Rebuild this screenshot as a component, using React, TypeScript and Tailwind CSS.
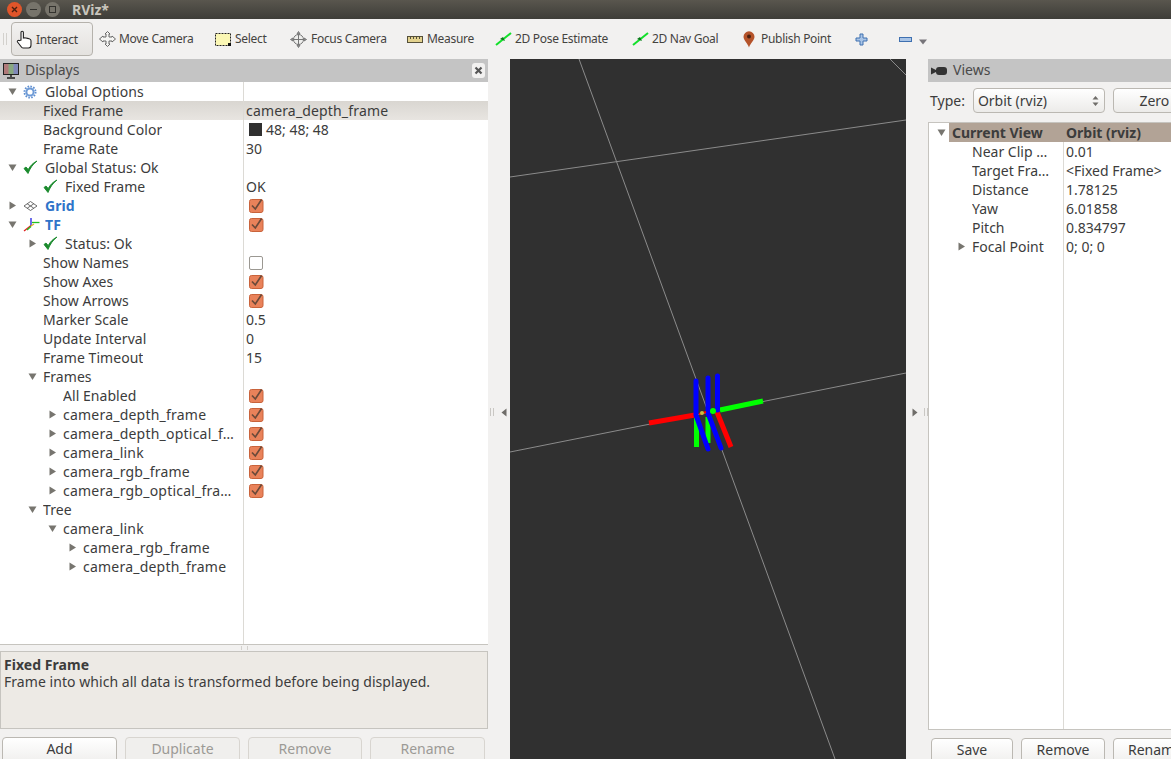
import type { ReactNode } from "react";

const FONT = "font-['Noto_Sans','Open_Sans',sans-serif]";
const DEPTH = ["pl-0", "pl-5", "pl-10", "pl-[60px]"];

type Row = {
  label: string;
  depth: number;
  arrow?: "open" | "closed";
  icon?: "gear" | "check" | "grid" | "tf";
  value?: string;
  swatch?: boolean;
  box?: boolean | "off";
  blue?: boolean;
  selected?: boolean;
};

const displayRows: Row[] = [
  { label: "Global Options", depth: 0, arrow: "open", icon: "gear" },
  { label: "Fixed Frame", depth: 1, value: "camera_depth_frame", selected: true },
  { label: "Background Color", depth: 1, value: "48; 48; 48", swatch: true },
  { label: "Frame Rate", depth: 1, value: "30" },
  { label: "Global Status: Ok", depth: 0, arrow: "open", icon: "check" },
  { label: "Fixed Frame", depth: 1, icon: "check", value: "OK" },
  { label: "Grid", depth: 0, arrow: "closed", icon: "grid", box: true, blue: true },
  { label: "TF", depth: 0, arrow: "open", icon: "tf", box: true, blue: true },
  { label: "Status: Ok", depth: 1, arrow: "closed", icon: "check" },
  { label: "Show Names", depth: 1, box: "off" },
  { label: "Show Axes", depth: 1, box: true },
  { label: "Show Arrows", depth: 1, box: true },
  { label: "Marker Scale", depth: 1, value: "0.5" },
  { label: "Update Interval", depth: 1, value: "0" },
  { label: "Frame Timeout", depth: 1, value: "15" },
  { label: "Frames", depth: 1, arrow: "open" },
  { label: "All Enabled", depth: 2, box: true },
  { label: "camera_depth_frame", depth: 2, arrow: "closed", box: true },
  { label: "camera_depth_optical_f…", depth: 2, arrow: "closed", box: true },
  { label: "camera_link", depth: 2, arrow: "closed", box: true },
  { label: "camera_rgb_frame", depth: 2, arrow: "closed", box: true },
  { label: "camera_rgb_optical_fra…", depth: 2, arrow: "closed", box: true },
  { label: "Tree", depth: 1, arrow: "open" },
  { label: "camera_link", depth: 2, arrow: "open" },
  { label: "camera_rgb_frame", depth: 3, arrow: "closed" },
  { label: "camera_depth_frame", depth: 3, arrow: "closed" },
];

const viewRows = [
  { label: "Near Clip …", value: "0.01" },
  { label: "Target Fra…", value: "<Fixed Frame>" },
  { label: "Distance", value: "1.78125" },
  { label: "Yaw", value: "6.01858" },
  { label: "Pitch", value: "0.834797" },
  { label: "Focal Point", value: "0; 0; 0", arrow: true },
];

function Arrow({ dir }: { dir: "open" | "closed" }) {
  return (
    <svg width="9" height="9" viewBox="0 0 9 9" className="shrink-0">
      {dir === "open" ? <path d="M0.5 1.5H8.5L4.5 8Z" fill="#77756f" /> : <path d="M1.5 0.5V8.5L8 4.5Z" fill="#77756f" />}
    </svg>
  );
}

function TreeIcon({ name }: { name: NonNullable<Row["icon"]> }) {
  if (name === "gear") {
    return (
      <svg width="14" height="14" viewBox="0 0 14 14">
        <circle cx="7" cy="7" r="3.6" fill="#fff" stroke="#6d9ad6" strokeWidth="2" />
        <circle cx="7" cy="7" r="5.6" fill="none" stroke="#5f8fd0" strokeWidth="1.8" strokeDasharray="1.6 1.3" />
      </svg>
    );
  }
  if (name === "check") {
    return (
      <svg width="15" height="15" viewBox="0 0 15 15">
        <path d="M1 8.500L5 13.500C7 8.500 9.500 4.500 14 1C10 3 7.500 5.500 5.200 9.500L3 7Z" fill="#1a8a2c" stroke="#1a8a2c" strokeWidth="0.9" />
      </svg>
    );
  }
  if (name === "grid") {
    return (
      <svg width="15" height="12" viewBox="0 0 15 12">
        <path d="M7.500 1.500L14 6L7.500 10.500L1 6ZM4.200 3.800L10.800 8.200M10.800 3.800L4.200 8.200" fill="none" stroke="#5a5a5a" strokeWidth="0.9" />
      </svg>
    );
  }
  return (
    <svg width="17" height="15" viewBox="0 0 17 15">
      <path d="M8 8.500L1 14" stroke="#e02020" strokeWidth="1.300" />
      <path d="M8 8.500V1" stroke="#2020e0" strokeWidth="1.300" />
      <path d="M8 9.500L4 13" stroke="#20c020" strokeWidth="1.300" />
      <path d="M9 5.500H16.500" stroke="#20c020" strokeWidth="1.300" />
      <path d="M8 9L11 7" stroke="#e0b020" strokeWidth="1.200" />
    </svg>
  );
}

function CheckBox({ on }: { on: boolean }) {
  if (!on) return <div className="h-[14px] w-[14px] rounded-[2px] border border-[#9b9892] bg-white" />;
  return (
    <svg width="15" height="15" viewBox="0 0 15 15">
      <rect x="0.5" y="1.5" width="13.5" height="13" rx="2" fill="#e9825a" stroke="#c9633b" />
      <path d="M3 7.500L6.300 11L12.600 1.500" fill="none" stroke="#6b4a3a" strokeWidth="1.700" />
    </svg>
  );
}

function DisplayRow({ row }: { row: Row }) {
  const spaced = row.label.includes("_") ? "tracking-[0.22px]" : "tracking-[0.05px]";
  return (
    <div className={`flex h-[19px] items-center ${row.selected ? "bg-gradient-to-b from-[#d9d6d1] to-[#e8e5e1]" : ""}`}>
      <div className={`flex h-full w-[243px] shrink-0 items-center ${DEPTH[row.depth]}`}>
        <div className="flex w-[23px] shrink-0 items-center pl-2">{row.arrow && <Arrow dir={row.arrow} />}</div>
        {row.icon && (
          <div className="flex w-[22px] shrink-0 items-center">
            <TreeIcon name={row.icon} />
          </div>
        )}
        <span className={`truncate whitespace-nowrap ${spaced} ${row.blue ? "font-bold text-[#2f74c9]" : ""}`}>{row.label}</span>
      </div>
      <div className="flex h-full min-w-0 flex-1 items-center gap-[4px] border-l border-[#dcdad5] pl-[2px]">
        {row.swatch && <div className="ml-[3px] h-[13px] w-[13px] bg-[#303030]" />}
        {row.value && <span className={`whitespace-nowrap ${row.selected ? "tracking-[0.16px]" : ""}`}>{row.value}</span>}
        {row.box && (
          <div className="ml-[3px]">
            <CheckBox on={row.box === true} />
          </div>
        )}
      </div>
    </div>
  );
}

function PanelHeader({ icon, title, close }: { icon: ReactNode; title: string; close?: boolean }) {
  return (
    <div className="flex h-[23px] shrink-0 items-center bg-[#c4c4c4] pl-[3px] pr-[3px] text-[14px] text-[#4a4a4a]">
      <div className="flex w-[22px] items-center">{icon}</div>
      <span className="mb-[3px] flex-1">{title}</span>
      {close && (
        <div className="flex h-[15px] w-[13px] items-center justify-center rounded-[3px] bg-[#f2f1f0]">
          <svg width="9" height="9" viewBox="0 0 9 9">
            <path d="M1.500 1.500L7.500 7.500M7.500 1.500L1.500 7.500" stroke="#555" strokeWidth="2.200" />
          </svg>
        </div>
      )}
    </div>
  );
}

function ActionButton({ label, disabled, width }: { label: string; disabled?: boolean; width: string }) {
  return (
    <div
      className={`flex h-[32px] shrink-0 items-center justify-center rounded-t-[4px] border pb-[9px] text-[14px] ${width} ${
        disabled
          ? "border-[#d8d5d0] bg-[#f0efed] text-[#9c9a96]"
          : "border-[#bbb8b2] bg-gradient-to-b from-white to-[#ecebe9] text-[#3c3c3c]"
      }`}
    >
      {label}
    </div>
  );
}

function Tool({ icon, label, width, iconWidth = "w-5" }: { icon: ReactNode; label: string; width: string; iconWidth?: string }) {
  return (
    <div className={`flex h-full shrink-0 items-center whitespace-nowrap ${width}`}>
      <div className={`flex shrink-0 items-center ${iconWidth}`}>{icon}</div>
      <span className="mb-[2px]">{label}</span>
    </div>
  );
}

function PoseArrow() {
  return (
    <svg width="17" height="14" viewBox="0 0 17 14">
      <path d="M1 13L16 1" stroke="#12e02a" strokeWidth="2" />
      <path d="M5 7L10 9L8 5Z" fill="#0a7a1a" />
    </svg>
  );
}

function Splitter({ side }: { side: "left" | "right" }) {
  const dots = (
    <svg width="4" height="8" viewBox="0 0 4 8">
      <path d="M0.500 0V8M3.500 0V8" stroke="#c9c7c3" strokeWidth="1" />
    </svg>
  );
  const arrow = (
    <svg width="6" height="9" viewBox="0 0 6 9">
      <path d={side === "left" ? "M5.500 0.500V8.500L0.500 4.500Z" : "M0.500 0.500V8.500L5.500 4.500Z"} fill="#6f6d69" />
    </svg>
  );
  return side === "left" ? (
    <div className="flex w-[22px] shrink-0 items-center gap-[7px] pl-[2px] pt-[6px]">
      {dots}
      {arrow}
    </div>
  ) : (
    <div className="flex w-[22px] shrink-0 items-center gap-[6px] pl-[6px] pt-[6px]">
      {arrow}
      {dots}
    </div>
  );
}

function Viewport() {
  return (
    <svg viewBox="0 0 396 700" className="block h-full w-[396px] shrink-0 bg-[#303030]">
      <g stroke="#8b8b8b" strokeWidth="1" fill="none">
        <path d="M69 0L325 700" />
        <path d="M0 118L396 61" />
        <path d="M0 393L396 314" />
        <path d="M380 0L396 16" />
      </g>
      <g transform="translate(-510 -59)" strokeWidth="5" fill="none">
        <path d="M696.500 417V447" stroke="#00ff00" />
        <path d="M708 417V443" stroke="#00ff00" />
        <path d="M720 410L763 401" stroke="#00ff00" />
        <path d="M649 423L695 415" stroke="#ff0000" />
        <path d="M717 412L731 447" stroke="#ff0000" />
        <path d="M696 381V415L708 449" stroke="#0000ff" strokeLinecap="round" />
        <path d="M708 378V413L721 448" stroke="#0000ff" strokeLinecap="round" />
        <path d="M717.500 376V410" stroke="#0000ff" strokeLinecap="round" />
        <circle cx="713" cy="411" r="3" fill="#00ff00" stroke="none" />
        <path d="M699 414L706 412" stroke="#ff0000" strokeWidth="2" />
        <circle cx="702" cy="413" r="2" fill="#c8c040" stroke="none" />
      </g>
    </svg>
  );
}

export default function App() {
  return (
    <div className={`flex h-[759px] w-[1171px] flex-col overflow-hidden bg-[#f2f1f0] text-[14px] leading-[19px] text-[#3c3c3c] ${FONT}`}>
      {/* title bar */}
      <div className="flex h-[19px] shrink-0 items-center bg-gradient-to-b from-[#59564e] to-[#3e3d38] pl-[7px]">
        <div className="flex h-[15px] w-[15px] items-center justify-center rounded-full bg-[#e0552a]">
          <svg width="7" height="7" viewBox="0 0 7 7">
            <path d="M1 1L6 6M6 1L1 6" stroke="#4a2010" strokeWidth="1.400" />
          </svg>
        </div>
        <div className="ml-[4px] flex h-[15px] w-[15px] items-center justify-center rounded-full bg-[#77746b]">
          <div className="h-[1.5px] w-[7px] bg-[#33322e]" />
        </div>
        <div className="ml-[4px] flex h-[15px] w-[15px] items-center justify-center rounded-full bg-[#77746b]">
          <div className="h-[7px] w-[7px] border border-[#33322e]" />
        </div>
        <span className="ml-[12px] text-[14px] font-bold text-[#c9c6bd]">RViz*</span>
      </div>

      {/* toolbar */}
      <div className="flex h-[40px] shrink-0 items-center text-[12px] tracking-[-0.3px] text-[#45433f]">
        <div className="ml-[3px] mr-[4px] h-[12px] w-[4px] border-x border-[#d3d1cd]" />
        <div className="mr-[6px] flex h-[34px] w-[82px] shrink-0 items-center rounded-[4px] border border-[#b5b2ac] bg-gradient-to-b from-[#f2f1f0] to-[#e4e2df] pl-[4px]">
          <svg width="18" height="19" viewBox="0 0 18 19" className="mr-[2px] shrink-0">
            <path d="M5 10V2.500a1.200 1.200 0 0 1 2.400 0V8l1-.2 1.600.2 1.600.4 1.600.4c1 .3 1.800.8 1.800 2V15c0 1.500-1 3-2.500 3H7c-1 0-1.500-.7-2-1.500L1.500 12c-.6-1 .7-2.200 1.700-1.300Z" fill="#fff" stroke="#222" strokeWidth="1.100" />
          </svg>
          <span>Interact</span>
        </div>
        <Tool
          width="w-[116px]"
          label="Move Camera"
          icon={
            <svg width="17" height="16" viewBox="0 0 17 16">
              <path d="M8.500 .5L11 3H10V6H13V5L16.500 8L13 11V10H10V13H11L8.500 15.500L6 13H7V10H4V11L.5 8L4 5V6H7V3H6Z" fill="#f4f4f2" stroke="#666" />
            </svg>
          }
        />
        <Tool
          width="w-[75px]"
          label="Select"
          icon={
            <svg width="16" height="13" viewBox="0 0 16 13">
              <rect x=".5" y=".5" width="15" height="12" fill="#fbf7b4" stroke="#222" strokeDasharray="2 1" />
              <rect x="13" y="10" width="3" height="3" fill="#111" />
            </svg>
          }
        />
        <Tool
          width="w-[117px]"
          label="Focus Camera"
          iconWidth="w-[21px]"
          icon={
            <svg width="17" height="17" viewBox="0 0 17 17">
              <circle cx="8.500" cy="8.500" r="5" fill="#eeeeec" stroke="#777" />
              <path d="M8.500 .5L10 3H7ZM8.500 16.500L7 14H10ZM.5 8.500L3 7V10ZM16.500 8.500L14 10V7Z" fill="#999" stroke="#777" />
              <path d="M8.500 3V14M3 8.500H14" stroke="#777" />
            </svg>
          }
        />
        <Tool
          width="w-[88px]"
          label="Measure"
          icon={
            <svg width="16" height="7" viewBox="0 0 16 7">
              <rect x=".5" y=".5" width="15" height="6" fill="#e3d28e" stroke="#55503a" />
              <path d="M3.500 1V3M6.500 1V3M9.500 1V3M12.500 1V3" stroke="#55503a" />
            </svg>
          }
        />
        <Tool width="w-[137px]" label="2D Pose Estimate" icon={<PoseArrow />} />
        <Tool width="w-[111px]" label="2D Nav Goal" icon={<PoseArrow />} />
        <Tool
          width="w-[112px]"
          label="Publish Point"
          iconWidth="w-[18px]"
          icon={
            <svg width="12" height="17" viewBox="0 0 12 17">
              <path d="M6 16.500C4.500 12 .5 9.500 .5 5.800a5.500 5.500 0 0 1 11 0C11.500 9.500 7.500 12 6 16.500Z" fill="#b5532a" />
              <circle cx="6" cy="5.500" r="2" fill="#4a2010" />
            </svg>
          }
        />
        <svg width="13" height="13" viewBox="0 0 13 13" className="shrink-0">
          <path d="M5 1H8V5H12V8H8V12H5V8H1V5H5Z" fill="#a9c4e6" stroke="#3f70b0" />
        </svg>
        <svg width="13" height="5" viewBox="0 0 13 5" className="ml-[31px] shrink-0">
          <rect x=".5" y=".5" width="12" height="4" fill="#a9c4e6" stroke="#3f70b0" />
        </svg>
        <svg width="8" height="6" viewBox="0 0 8 6" className="ml-[7px] mt-[6px] shrink-0">
          <path d="M0 .5H8L4 5.500Z" fill="#77757a" />
        </svg>
      </div>

      {/* main area */}
      <div className="flex min-h-0 flex-1">
        {/* displays panel */}
        <div className="flex w-[488px] shrink-0 flex-col">
          <PanelHeader
            close
            title="Displays"
            icon={
              <svg width="16" height="16" viewBox="0 0 16 16">
                <rect x=".5" y=".5" width="15" height="11" fill="#88a880" stroke="#222" />
                <rect x="1" y="1" width="4.500" height="10" fill="#b07a7a" />
                <rect x="10.500" y="1" width="4.500" height="10" fill="#8088b8" />
                <path d="M8 12V14M4 15H12" stroke="#222" strokeWidth="1.500" />
              </svg>
            }
          />
          <div className="h-[563px] shrink-0 overflow-hidden border-b border-[#c6c4bf] bg-white">
            {displayRows.map((row, i) => (
              <DisplayRow key={i} row={row} />
            ))}
            <div className="ml-[243px] h-full border-l border-[#dcdad5]" />
          </div>
          <div className="flex h-[6px] shrink-0 items-center justify-center">
            <div className="h-[4px] w-[7px] border-x border-[#d3d1cd]" />
          </div>
          <div className="h-[78px] shrink-0 border border-[#c6c4bf] bg-[#edeae5] pl-[3px] pt-[4px] text-[14px] leading-[17px] tracking-[0.05px]">
            <div className="font-bold">Fixed Frame</div>
            <div>Frame into which all data is transformed before being displayed.</div>
          </div>
          <div className="mt-[8px] flex gap-[8px] pl-[2px]">
            <ActionButton label="Add" width="w-[115px]" />
            <ActionButton label="Duplicate" disabled width="w-[115px]" />
            <ActionButton label="Remove" disabled width="w-[114px]" />
            <ActionButton label="Rename" disabled width="w-[115px]" />
          </div>
        </div>

        <Splitter side="left" />
        <Viewport />
        <Splitter side="right" />

        {/* views panel */}
        <div className="flex min-w-0 flex-1 flex-col">
          <PanelHeader
            title="Views"
            icon={
              <svg width="16" height="8" viewBox="0 0 16 8">
                <path d="M0 .5L5 3V5L0 7.500Z" fill="#333" />
                <rect x="5" y="0" width="11" height="8" rx="3" fill="#333" />
              </svg>
            }
          />
          <div className="mt-[6px] flex h-[25px] shrink-0 items-center whitespace-nowrap pl-[2px]">
            <span>Type:</span>
            <div className="ml-[8px] flex h-[25px] w-[132px] shrink-0 items-center justify-between rounded-[4px] border border-[#bbb8b2] bg-gradient-to-b from-white to-[#ecebe9] pl-[4px] pr-[5px]">
              <span>Orbit (rviz)</span>
              <svg width="7" height="12" viewBox="0 0 7 12">
                <path d="M3.500 1L6.500 4.500H.5ZM3.500 11L.5 7.500H6.500Z" fill="#6f6d69" />
              </svg>
            </div>
            <div className="ml-[8px] flex h-[25px] w-[80px] shrink-0 items-center justify-center rounded-[4px] border border-[#bbb8b2] bg-gradient-to-b from-white to-[#ecebe9] pl-[3px]">
              Zero
            </div>
          </div>
          <div className="relative mt-[9px] h-[608px] shrink-0 overflow-hidden border-y border-l border-[#c6c4bf] bg-white">
            <div className="flex h-[19px] items-center">
              <div className="flex w-[20px] shrink-0 items-center pl-[8px]">
                <Arrow dir="open" />
              </div>
              <div className="flex h-full w-[115px] shrink-0 items-center bg-[#b2a396] pl-[3px] font-bold">Current View</div>
              <div className="flex h-full flex-1 items-center bg-[#b2a396] pl-[2px] font-bold">Orbit (rviz)</div>
            </div>
            {viewRows.map((row) => (
              <div key={row.label} className="flex h-[19px] items-center whitespace-nowrap">
                <div className="flex w-[43px] shrink-0 items-center justify-end pr-[6px]">
                  {row.arrow && <Arrow dir="closed" />}
                </div>
                <div className="w-[92px] shrink-0 overflow-hidden">{row.label}</div>
                <div className="pl-[2px]">{row.value}</div>
              </div>
            ))}
            <div className="absolute bottom-0 left-[134px] top-[19px] border-l border-[#dcdad5]" />
          </div>
          <div className="mt-[8px] flex gap-[8px] pl-[3px]">
            <ActionButton label="Save" width="w-[82px]" />
            <ActionButton label="Remove" width="w-[84px]" />
            <ActionButton label="Rename" width="w-[84px]" />
          </div>
        </div>
      </div>
    </div>
  );
}
